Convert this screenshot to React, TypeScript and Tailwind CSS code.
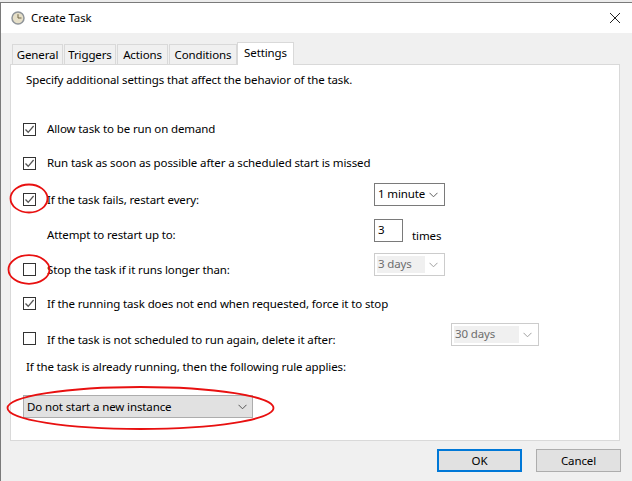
const font = { fontFamily: '"Noto Sans", "Open Sans", sans-serif' };

function Chevron({ color = "#606060", w = 9 }: { color?: string; w?: number }) {
  return (
    <svg width={w} height="6" viewBox="0 0 9 6" fill="none" className="shrink-0">
      <path d="M0.5 0.8 L4.5 4.8 L8.5 0.8" stroke={color} strokeWidth="1" />
    </svg>
  );
}

function Box({ checked, className = "" }: { checked?: boolean; className?: string }) {
  return (
    <div className={`w-[13px] h-[13px] border border-[#333333] bg-white shrink-0 flex items-center justify-center ${className}`}>
      {checked && (
        <svg width="11" height="11" viewBox="0 0 11 11" fill="none">
          <path d="M1.5 5.5 L4.2 8.3 L9.6 2" stroke="#555555" strokeWidth="1.3" />
        </svg>
      )}
    </div>
  );
}

function Tab({ label, w }: { label: string; w: string }) {
  return (
    <div className={`${w} h-[20px] bg-[#f0f0f0] border border-b-0 border-[#d9d9d9] flex items-center justify-center text-black`}>
      {label}
    </div>
  );
}

export default function App() {
  return (
    <div className="w-[632px] h-[481px] bg-[#f0f0f0] overflow-hidden relative flex flex-col text-[11.5px] tracking-[-0.12px] text-black" style={font}>
      <div className="h-[2px] bg-[#ececec] shrink-0" />
      <div className="h-[31px] bg-white border-t border-t-[#7a7a7a] border-l border-l-[#7a7a7a] flex items-center shrink-0">
        <svg width="14" height="14" viewBox="0 0 14 14" className="ml-[10px]">
          <circle cx="7" cy="7" r="6" fill="#e6dfc8" stroke="#8f9499" strokeWidth="1.5" />
          <path d="M7 3.2 V7 H10.5" stroke="#6f6547" strokeWidth="1" fill="none" />
        </svg>
        <span className="ml-[6px]">Create Task</span>
        <svg width="12" height="12" viewBox="0 0 12 12" className="ml-auto mr-[11px]">
          <path d="M1 1 L11 11 M11 1 L1 11" stroke="#222" strokeWidth="1" />
        </svg>
      </div>

      <div className="flex-1 border-l border-l-[#7a7a7a] pl-[9px] flex flex-col">
        <div className="flex items-end h-[31px] pl-[2px] gap-[1px]">
          <Tab label="General" w="w-[51px]" />
          <Tab label="Triggers" w="w-[52px]" />
          <Tab label="Actions" w="w-[51px]" />
          <Tab label="Conditions" w="w-[68px]" />
          <div className="w-[57px] h-[23px] bg-white border border-b-0 border-[#d9d9d9] flex items-start justify-center relative z-10 -mb-px -ml-px">
            <span className="mt-[1px]">Settings</span>
          </div>
        </div>

        <div className="w-[610px] h-[377px] bg-white border border-[#d9d9d9] flex flex-col pl-[12px]">
          <div className="h-[20px] mt-[5px] ml-[3px] flex items-center">
            Specify additional settings that affect the behavior of the task.
          </div>

          <div className="h-[22px] mt-[28px] flex items-center">
            <Box checked />
            <span className="ml-[11px]">Allow task to be run on demand</span>
          </div>
          <div className="h-[22px] mt-[12px] flex items-center">
            <Box checked />
            <span className="ml-[11px]">Run task as soon as possible after a scheduled start is missed</span>
          </div>

          <div className="h-[26px] mt-[9px] flex items-start">
            <Box checked className="mt-[10px]" />
            <span className="ml-[11px] w-[327px] mt-[8px]">If the task fails, restart every:</span>
            <div className="w-[71px] h-[23px] border border-[#7a7a7a] flex items-center pl-[3px] pr-[6px] justify-between">
              <span className="-mt-[2px]">1 minute</span>
              <Chevron />
            </div>
          </div>

          <div className="h-[23px] mt-[10px] flex items-start">
            <span className="ml-[24px] w-[327px] mt-[7px]">Attempt to restart up to:</span>
            <div className="w-[29px] h-[23px] border border-[#7a7a7a] pl-[3px] flex items-center pb-[2px]">3</div>
            <span className="ml-[9px] mt-[8px]">times</span>
          </div>

          <div className="h-[23px] mt-[11px] flex items-start">
            <Box className="mt-[10px]" />
            <span className="ml-[11px] w-[327px] mt-[8px]">Stop the task if it runs longer than:</span>
            <div className="w-[71px] h-[23px] border border-[#cccccc] flex items-center pl-[2px] pr-[6px] justify-between text-[#6d6d6d]">
              <span className="bg-[#f0f0f0] w-[48px] h-[17px] flex items-center pl-[1px] pb-[2px]">3 days</span>
              <Chevron color="#a0a0a0" />
            </div>
          </div>

          <div className="h-[22px] mt-[16px] flex items-center">
            <Box checked />
            <span className="ml-[11px] mt-[2px]">If the running task does not end when requested, force it to stop</span>
          </div>

          <div className="h-[23px] mt-[9px] flex items-start">
            <Box className="mt-[9px]" />
            <span className="ml-[11px] w-[404px] mt-[8px]">If the task is not scheduled to run again, delete it after:</span>
            <div className="w-[88px] h-[23px] border border-[#cccccc] flex items-center pl-[2px] pr-[6px] justify-between text-[#6d6d6d]">
              <span className="bg-[#f0f0f0] w-[65px] h-[17px] flex items-center pl-[1px] pb-[2px]">30 days</span>
              <Chevron color="#a0a0a0" />
            </div>
          </div>

          <div className="h-[20px] mt-[11px] ml-[3px] flex items-center">
            If the task is already running, then the following rule applies:
          </div>

          <div className="w-[230px] h-[23px] mt-[18px] bg-[#e1e1e1] border border-[#adadad] flex items-center justify-between pl-[3px] pr-[5px]">
            <span>Do not start a new instance</span>
            <Chevron color="#555555" />
          </div>
        </div>

        <div className="flex justify-end gap-[14px] mt-[8px] pr-[11px]">
          <div className="w-[85px] h-[23px] bg-[#e1e1e1] border-2 border-[#0078d7] flex items-center justify-center">OK</div>
          <div className="w-[85px] h-[23px] bg-[#e1e1e1] border border-[#adadad] flex items-center justify-center">Cancel</div>
        </div>
      </div>

      <svg className="absolute left-0 top-0 pointer-events-none" width="632" height="481" viewBox="0 0 632 481" fill="none">
        <ellipse cx="29" cy="198.5" rx="18.5" ry="14" stroke="#e81010" strokeWidth="1.8" />
        <ellipse cx="29" cy="269.5" rx="20.5" ry="14.3" stroke="#e81010" strokeWidth="1.8" />
        <ellipse cx="140.5" cy="408" rx="133" ry="21" stroke="#e81010" strokeWidth="1.8" />
      </svg>
    </div>
  );
}
